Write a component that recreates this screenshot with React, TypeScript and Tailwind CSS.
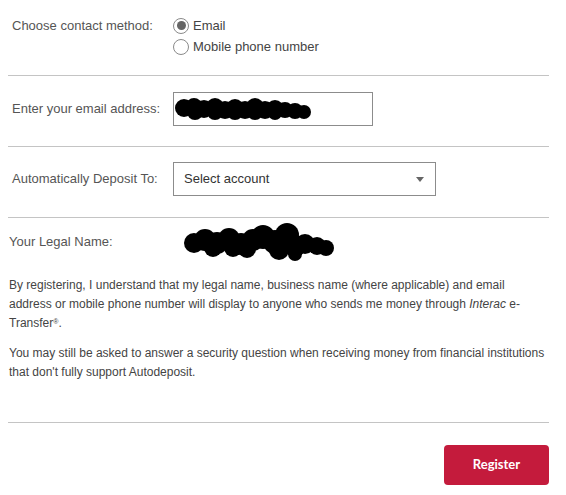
import React from 'react';

function Radio({ checked, label }: { checked?: boolean; label: string }) {
    return (
        <label className="flex items-center gap-[4px] leading-[21px]">
            <span className="flex h-[16px] w-[16px] items-center justify-center rounded-full border border-[#8a8a8a] bg-white">
                {checked && <span className="h-[9px] w-[9px] rounded-full bg-[#666]" />}
            </span>
            <span className="text-[13px] text-[#444]">{label}</span>
        </label>
    );
}

// blacked-out scribble over private text
function Scribble({ width, height, dots }: { width: number; height: number; dots: [number, number, number][] }) {
    return (
        <svg width={width} height={height} viewBox={`0 0 ${width} ${height}`}>
            {dots.map(([cx, cy, r], i) => (
                <circle key={i} cx={cx} cy={cy} r={r} fill="#000" />
            ))}
        </svg>
    );
}

const emailDots: [number, number, number][] = [
    [9, 10, 9], [19, 8, 8], [29, 11, 9], [40, 9, 9], [50, 12, 9], [60, 10, 9],
    [70, 12, 9], [80, 9, 9], [90, 12, 9], [100, 11, 9], [110, 12, 8], [120, 13, 8],
    [129, 14, 7], [20, 14, 8], [60, 14, 8], [100, 15, 7], [40, 14, 8], [80, 14, 8],
];

const nameDots: [number, number, number][] = [
    [11, 21, 10], [22, 18, 11], [34, 21, 11], [46, 17, 11], [58, 22, 11], [70, 18, 11],
    [80, 15, 12], [92, 20, 12], [104, 13, 12], [112, 24, 11], [122, 22, 10], [134, 24, 9],
    [143, 26, 8], [30, 26, 9], [64, 27, 9], [96, 28, 10], [112, 32, 7], [50, 26, 9],
];

export default function App() {
    return (
        <div className="h-[495px] w-[566px] overflow-hidden bg-white font-['Liberation_Sans',Arial,sans-serif] text-[#555]">
            <div className="w-[557px] px-2">
                <div className="flex pt-[15px] pb-[18px]">
                    <div className="w-[165px] pl-1 text-[13px] leading-[21px]">Choose contact method:</div>
                    <div className="flex flex-col">
                        <Radio checked label="Email" />
                        <Radio label="Mobile phone number" />
                    </div>
                </div>

                <div className="h-px bg-[#c4c4c4]" />

                <div className="flex items-center pt-[16px] pb-[20px]">
                    <div className="w-[165px] pl-1 text-[13px]">Enter your email address:</div>
                    <div className="flex h-[34px] w-[200px] items-center border border-[#8c8c8c] pl-[1px]">
                        <Scribble width={138} height={22} dots={emailDots} />
                    </div>
                </div>

                <div className="h-px bg-[#c4c4c4]" />

                <div className="flex items-center pt-[15px] pb-[21px]">
                    <div className="w-[165px] pl-1 text-[13px]">Automatically Deposit To:</div>
                    <div className="flex h-[34px] w-[263px] items-center justify-between border border-[#8c8c8c] pr-[11px] pl-[10px]">
                        <span className="text-[13px] text-[#333]">Select account</span>
                        <svg width="8" height="5" viewBox="0 0 8 5">
                            <path d="M0 0h8L4 5z" fill="#666" />
                        </svg>
                    </div>
                </div>

                <div className="h-px bg-[#c4c4c4]" />

                <div className="flex h-[48px] items-center">
                    <div className="w-[175px] pl-[1px] text-[13px]">Your Legal Name:</div>
                    <Scribble width={152} height={40} dots={nameDots} />
                </div>

                <p className="mt-[10px] pl-[1px] text-[12px] leading-[19px] text-[#444]">
                    By registering, I understand that my legal name, business name (where applicable) and email
                    <br />
                    address or mobile phone number will display to anyone who sends me money through <i>Interac</i> e-
                    <br />
                    Transfer<sup className="text-[7px]">®</sup>.
                </p>
                <p className="mt-[11px] pl-[1px] text-[12px] leading-[19px] text-[#444]">
                    You may still be asked to answer a security question when receiving money from financial institutions
                    <br />
                    that don't fully support Autodeposit.
                </p>

                <div className="mt-[40px] h-px bg-[#c4c4c4]" />

                <div className="flex justify-end pt-[22px]">
                    <button className="h-[40px] w-[105px] rounded-[4px] bg-[#c41b3c] font-['Lato',sans-serif] text-[13px] font-bold text-white">
                        Register
                    </button>
                </div>
            </div>
        </div>
    );
}
